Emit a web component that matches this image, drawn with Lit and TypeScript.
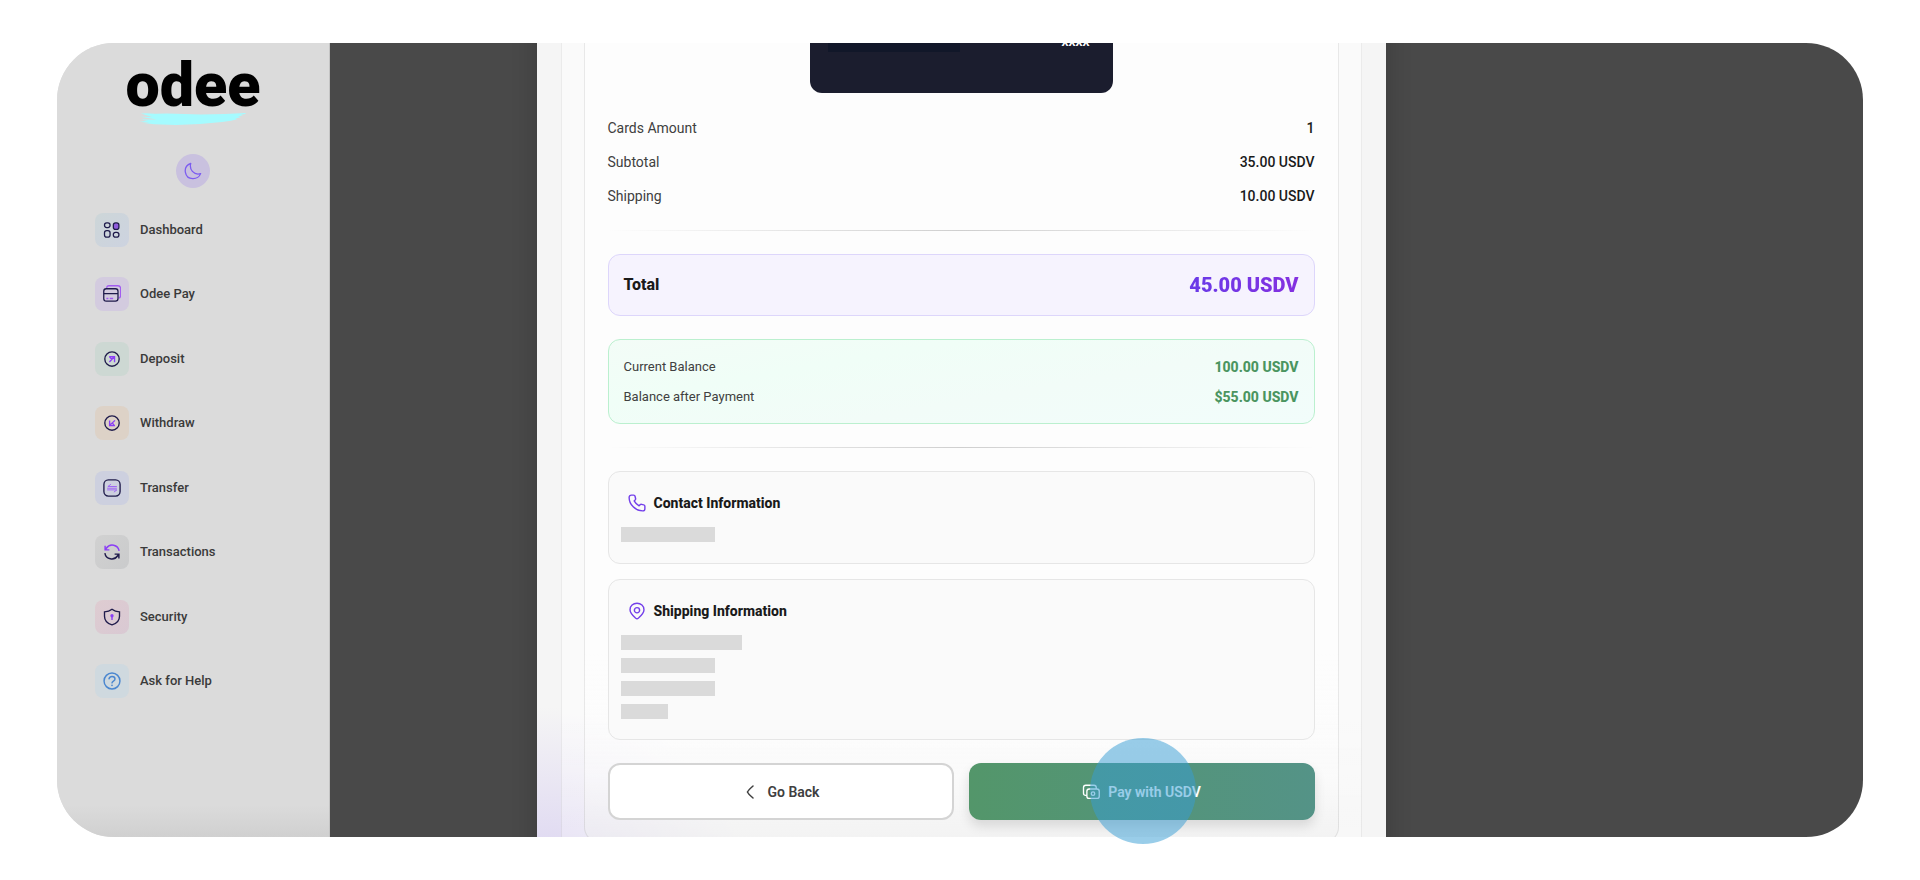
import { LitElement, html, css, svg } from "lit";
import { customElement } from "lit/decorators.js";

const navy = "#1f1b4b";
const violet = "#8b3ff5";

const icons = {
  dashboard: svg`<g fill="none" stroke=${navy} stroke-width="1.7"><rect x="2" y="2.500" width="7.400" height="6.200" rx="2.900"/><rect x="13.800" y="2.500" width="7.400" height="8.600" rx="2.900" fill="#8f5bdc"/><rect x="2" y="12.800" width="7.400" height="8.600" rx="2.900"/><rect x="13.800" y="15.200" width="7.400" height="6.200" rx="2.900"/></g>`,
  pay: svg`<g fill="none" stroke-width="1.7"><path d="M5 5V4q0-3 3-3h12q3.400 0 3.400 3.400V14q0 3-2.400 3.400" stroke="#a25cf0"/><rect x="1" y="5" width="19" height="16.500" rx="3.400" stroke=${navy}/><path d="M1 11.500H20" stroke=${navy}/><path d="M4.500 18h2.700M9 18h4.500" stroke="#a25cf0"/></g>`,
  deposit: svg`<circle cx="12" cy="12" r="9.600" fill="none" stroke=${navy} stroke-width="1.800"/><path d="M8.500 16l6.500-7M8.200 9h7.200v7.200M8.800 9.500l3 3" fill="none" stroke=${violet} stroke-width="1.800"/>`,
  withdraw: svg`<circle cx="12" cy="12" r="9.600" fill="none" stroke=${navy} stroke-width="1.800"/><path d="M16 8.500L9 15M8.800 8.500v7h7.200M11.800 11.800l3 3" fill="none" stroke=${violet} stroke-width="1.800"/>`,
  transfer: svg`<rect x="1.200" y="1.200" width="21.600" height="21.600" rx="6" fill="none" stroke=${navy} stroke-width="1.800"/><path d="M18.500 10H6.500l4-3M5.500 12.300h13M5.500 14.500h13l-4 3" fill="none" stroke="#9b5cf5" stroke-width="1.200"/>`,
  transactions: svg`<g fill="none" stroke-width="1.900"><path d="M21.500 10.500A9.300 9.300 0 0 0 4.500 7L3 9M2.800 3.500v5.700H8.500" stroke=${violet}/><path d="M2.500 13.500A9.300 9.300 0 0 0 19.500 17l1.500-2M21.200 20.500v-5.700H15.500" stroke=${navy}/></g>`,
  security: svg`<path d="M12 1.700c2.700 2.100 6 3.200 10 3.400V11c0 5.800-4 9.800-10 11.500C6 20.800 2 16.800 2 11V5.100c4-.2 7.300-1.300 10-3.400z" fill="none" stroke=${navy} stroke-width="1.800"/><circle cx="12" cy="10.300" r="2.200" fill=${violet}/><path d="M12 11v5" stroke=${violet} stroke-width="1.900"/>`,
  help: svg`<g fill="none" stroke="#4a86cf" stroke-width="1.900" stroke-linecap="round"><circle cx="12" cy="12" r="10.600"/><path d="M8 9c.6-2 2.100-3.100 4-3.100 2.300 0 4 1.400 4 3.400 0 2.700-4 2.800-4 5.200"/><path d="M12 17.700v.2" stroke-width="2.200"/></g>`,
};

const nav = [
  { label: "Dashboard", icon: icons.dashboard, tint: "blue" },
  { label: "Odee Pay", icon: icons.pay, tint: "purple" },
  { label: "Deposit", icon: icons.deposit, tint: "green" },
  { label: "Withdraw", icon: icons.withdraw, tint: "orange" },
  { label: "Transfer", icon: icons.transfer, tint: "indigo" },
  { label: "Transactions", icon: icons.transactions, tint: "gray" },
  { label: "Security", icon: icons.security, tint: "red" },
  { label: "Ask for Help", icon: icons.help, tint: "sky" },
];

@customElement("odee-sidebar")
export class OdeeSidebar extends LitElement {
  static styles = css`
    :host {
      display: flex;
      flex-direction: column;
      align-items: center;
      box-sizing: border-box;
      padding-top: 14px;
      background: linear-gradient(#dbdbdb calc(100% - 32px), #d0d0d0);
      border-right: 1px solid #c4c4c4;
      font-family: Roboto, "Noto Sans", sans-serif;
    }
    .logo {
      display: flex;
      flex-direction: column;
      align-items: center;
      font-size: 61px;
      font-weight: 900;
      line-height: 56px;
      color: #000;
      text-decoration: none;
    }
    .brush {
      display: block;
    }
    .theme {
      display: grid;
      place-items: center;
      width: 34px;
      height: 34px;
      margin-top: 27px;
      padding: 0;
      border: 0;
      border-radius: 50%;
      background: #c9c1df;
    }
    nav {
      align-self: stretch;
      display: flex;
      flex-direction: column;
      justify-content: space-between;
      height: 485px;
      margin-top: 25px;
      padding: 0 38px;
    }
    .item {
      display: flex;
      align-items: center;
      gap: 11px;
      color: #3a3a3a;
      font-size: 13px;
      font-weight: 500;
      line-height: 20px;
      text-decoration: none;
    }
    .chip {
      display: grid;
      place-items: center;
      width: 34px;
      height: 34px;
      border-radius: 8px;
    }
    .blue { background: linear-gradient(135deg, #cdd6d8, #cdd3e0); }
    .purple { background: #d3cbdf; }
    .green { background: #cdd8d3; }
    .orange { background: #ddd2c7; }
    .indigo { background: #cdd0df; }
    .gray { background: linear-gradient(135deg, #d1d1d1, #cacbcc); }
    .red { background: linear-gradient(135deg, #deccd1, #d9c9d3); }
    .sky { background: #cfd9df; }
  `;

  render() {
    return html`
      <a class="logo" href="#" aria-label="odee">
        <span>odee</span>
        <svg class="brush" width="108" height="14" viewBox="0 0 108 14">
          <path fill="#a5fbff" d="M2 .5l14-.5-8 1.100 20-.6 34 1 24-.4 21-1.100-1 1-5 1 3 .4-5 1.200 3 .6-6 1.400 3 .5-7 1.600-9 1.300-22 2-24 1-22-.7-12-1.600 7-.2-10-1.500 9-.1-7-1.300h16L1 3.700l12 .2z" />
        </svg>
      </a>
      <button class="theme" aria-label="Toggle theme">
        <svg width="18" height="18" viewBox="0 0 24 24" fill="none" stroke="#7c5cf0" stroke-width="1.700" stroke-linejoin="round">
          <path d="M9 1.800C3.500 4 1 8.500 1.800 13.500 2.800 19 7 22.300 12 22.200c4.500 0 8.500-2.500 10.200-6.700-3.500 1-8.200.2-11-3C8.500 9.500 8 5.500 9 1.800z" />
        </svg>
      </button>
      <nav>
        ${nav.map(
          (n) => html`<a class="item" href="#">
            <span class="chip ${n.tint}"><svg width="18" height="18" viewBox="0 0 24 24">${n.icon}</svg></span>
            <span>${n.label}</span>
          </a>`
        )}
      </nav>
    `;
  }
}

@customElement("order-summary")
export class OrderSummary extends LitElement {
  static styles = css`
    :host {
      display: block;
      box-sizing: border-box;
      padding: 0 24px;
      background:
        radial-gradient(ellipse 190px 150px at 10px calc(100% - 10px), rgba(207, 196, 239, 0.6), rgba(207, 196, 239, 0)),
        #f5f5f5;
      box-shadow: 0 0 24px rgba(0, 0, 0, 0.2);
      font-family: Roboto, "Noto Sans", sans-serif;
      font-size: 14px;
      line-height: 22px;
      color: #404040;
    }
    .outer {
      border: 1px solid rgba(0, 0, 0, 0.06);
      border-width: 0 1px;
      padding: 0 22px 24px;
      background: linear-gradient(rgba(255, 255, 255, 0.5) 85%, rgba(255, 255, 255, 0.2));
    }
    .sheet {
      display: flex;
      flex-direction: column;
      padding: 0 23px 22px;
      border: 1px solid rgba(0, 0, 0, 0.08);
      border-top: 0;
      border-radius: 0 0 16px 16px;
      background: linear-gradient(
        rgba(255, 255, 255, 0.6) 80%,
        rgba(252, 252, 252, 0.5) 93%,
        rgba(236, 236, 236, 0.5)
      );
    }
    .bank-card {
      align-self: center;
      display: flex;
      align-items: flex-end;
      justify-content: space-between;
      box-sizing: border-box;
      width: 303px;
      height: 191px;
      padding: 0 23px 41px 18px;
      border-radius: 12px;
      background: #1b1d2e;
    }
    .mask {
      width: 132px;
      height: 24px;
      background: #111729;
    }
    .digits {
      color: #fff;
      font-size: 11px;
      font-weight: 700;
      line-height: 14px;
      padding-bottom: 2px;
    }
    dl,
    dd,
    h3 {
      margin: 0;
    }
    .lines {
      display: flex;
      flex-direction: column;
      gap: 12px;
      margin-top: 24px;
    }
    .row {
      display: flex;
      justify-content: space-between;
      align-items: center;
    }
    .lines dd {
      color: #1a1a1a;
      font-weight: 500;
    }
    .rule {
      width: 100%;
      height: 1px;
      margin: 23px 0;
      border: 0;
      background: linear-gradient(90deg, transparent, #cfcfcf, transparent);
    }
    .total,
    .balance {
      padding: 15px;
      border: 1px solid #ddd6fb;
      border-radius: 12px;
      background: #f6f3fe;
    }
    .total dt {
      color: #1a1a1a;
      font-size: 16px;
      font-weight: 800;
      line-height: 30px;
    }
    .total dd {
      background: linear-gradient(90deg, #6a3ae8, #8430e0);
      -webkit-background-clip: text;
      background-clip: text;
      color: transparent;
      font-size: 20px;
      font-weight: 900;
      line-height: 30px;
    }
    .balance {
      display: flex;
      flex-direction: column;
      gap: 10px;
      margin-top: 23px;
      padding: 17px 15px 16px;
      border-color: #bbf0cf;
      background: linear-gradient(170deg, #f3fcf7, #f0fef7 30%, #f2fcf8 60%, #f2fdfb);
      font-size: 13px;
      line-height: 20px;
    }
    .balance dd {
      color: #4b9560;
      font-size: 14px;
      font-weight: 800;
    }
    .info {
      padding: 19px 12px 21px;
      border: 1px solid #e6e6e6;
      border-radius: 12px;
      background: #fafafa;
    }
    .info + .info {
      margin-top: 15px;
      padding-bottom: 20px;
    }
    h3 {
      display: flex;
      align-items: center;
      gap: 8px;
      padding-left: 7px;
      color: #1a1a1a;
      font-size: 14px;
      font-weight: 800;
      line-height: 24px;
    }
    .bars {
      display: flex;
      flex-direction: column;
      gap: 8px;
      margin-top: 12px;
    }
    .bar {
      height: 15px;
      background: #dadada;
    }
    .actions {
      display: grid;
      grid-template-columns: 1fr 1fr;
      gap: 15px;
      margin-top: 23px;
    }
    button {
      display: flex;
      align-items: center;
      justify-content: center;
      gap: 8px;
      height: 57px;
      border-radius: 12px;
      font: inherit;
      font-weight: 600;
    }
    .back {
      border: 2px solid #d4d4d4;
      background: #fff;
      color: #404040;
    }
    .pay {
      border: 0;
      background: linear-gradient(90deg, #53966a, #549387);
      color: #fff;
      box-shadow: 0 6px 12px rgba(0, 0, 0, 0.12);
    }
  `;

  private bars(widths: number[]) {
    return html`<div class="bars">${widths.map((w) => html`<div class="bar" style="width:${w}px"></div>`)}</div>`;
  }

  render() {
    return html`
      <div class="outer">
        <section class="sheet">
          <div class="bank-card"><span class="mask"></span><span class="digits">XXXX</span></div>
          <dl class="lines">
            <div class="row"><dt>Cards Amount</dt><dd>1</dd></div>
            <div class="row"><dt>Subtotal</dt><dd>35.00 USDV</dd></div>
            <div class="row"><dt>Shipping</dt><dd>10.00 USDV</dd></div>
          </dl>
          <hr class="rule" />
          <dl class="total row"><dt>Total</dt><dd>45.00 USDV</dd></dl>
          <dl class="balance">
            <div class="row"><dt>Current Balance</dt><dd>100.00 USDV</dd></div>
            <div class="row"><dt>Balance after Payment</dt><dd>$55.00 USDV</dd></div>
          </dl>
          <hr class="rule" />
          <div class="info">
            <h3>
              <svg width="18" height="18" viewBox="0 0 24 24" fill="none" stroke="#7440ea" stroke-width="1.900" stroke-linejoin="round"><path d="M4.500 1.500h3c1 0 1.700.6 1.900 1.500l.7 3c.2.800 0 1.500-.6 2L8.200 9.200c1.500 2.800 3.700 5 6.600 6.600l1.300-1.400c.5-.5 1.200-.7 2-.6l2.900.7c.9.200 1.500.9 1.500 1.900v3.100c0 1.700-1.200 3-3 3C10 22.500 1.500 14 1.500 4.500c0-1.800 1.300-3 3-3z" /></svg>
              Contact Information
            </h3>
            ${this.bars([94])}
          </div>
          <div class="info">
            <h3>
              <svg width="18" height="18" viewBox="0 0 24 24" fill="none" stroke="#7440ea" stroke-width="1.900"><path d="M12 22.300c-.8 0-1.400-.4-2-.9C6 17.800 2.700 14.500 2.700 10.300 2.700 5.300 6.800 1.700 12 1.700s9.300 3.600 9.300 8.600c0 4.200-3.300 7.500-7.300 11.100-.6.500-1.200.9-2 .9z" /><circle cx="12" cy="11" r="3.500" /></svg>
              Shipping Information
            </h3>
            ${this.bars([121, 94, 94, 47])}
          </div>
          <div class="actions">
            <button class="back">
              <svg width="18" height="18" viewBox="0 0 24 24" fill="none" stroke="#404040" stroke-width="2" stroke-linecap="round" stroke-linejoin="round"><path d="M16 4c-2.500 2.300-6 5-7.500 8 1.500 3 5 5.700 7.500 8" /></svg>
              Go Back
            </button>
            <button class="pay">
              <svg width="18" height="18" viewBox="0 0 24 24" fill="none" stroke="#fff" stroke-width="1.800" stroke-linejoin="round"><path d="M6.500 16.500H5Q2 16.500 2 13.500V6q0-3 3-3h11q3 0 3 3v2" /><rect x="6.500" y="8" width="16.500" height="12.500" rx="3" /><circle cx="14.700" cy="14.200" r="2.300" /></svg>
              Pay with USDV
            </button>
          </div>
        </section>
      </div>
    `;
  }
}

@customElement("app-root")
export class AppRoot extends LitElement {
  static styles = css`
    :host {
      display: block;
      position: relative;
      box-sizing: border-box;
      height: 100vh;
      padding: 43px 57px;
      background: #fff;
      overflow: hidden;
    }
    .stage {
      display: grid;
      height: 100%;
      grid-template: 100% / 100%;
      overflow: hidden;
      border-radius: 57px;
      background: linear-gradient(90deg, #dbdbdb 200px, #494949 200px);
    }
    odee-sidebar,
    .modal {
      grid-area: 1 / 1;
    }
    odee-sidebar {
      justify-self: start;
      width: 273px;
    }
    .modal {
      justify-self: center;
      align-self: start;
      width: 849px;
      margin-top: -141px;
      margin-left: 2px;
    }
    .tap {
      position: absolute;
      left: calc(50% + 130px);
      bottom: 36px;
      width: 106px;
      height: 106px;
      border-radius: 50%;
      background: rgba(55, 157, 212, 0.51);
      pointer-events: none;
    }
  `;

  render() {
    return html`
      <main class="stage">
        <odee-sidebar></odee-sidebar>
        <order-summary class="modal"></order-summary>
      </main>
      <div class="tap"></div>
    `;
  }
}
